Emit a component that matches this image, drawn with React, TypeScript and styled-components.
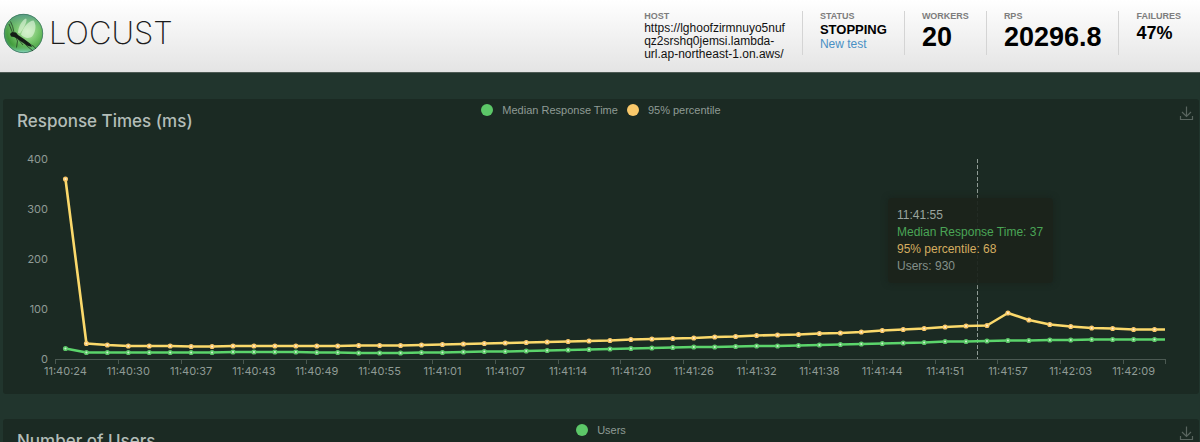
import React, { useLayoutEffect, useRef, useState } from 'react';
import styled, { createGlobalStyle } from 'styled-components';

const GlobalStyle = createGlobalStyle`
  * { box-sizing: border-box; }
  body {
    margin: 0;
    background: #21352d;
    font-family: "Liberation Sans", Arial, sans-serif;
  }
`;

const chartFont = 'Inter, "Liberation Sans", sans-serif';

const Page = styled.div`
  height: 100vh;
  overflow-y: auto;
  scrollbar-width: none;
`;

const Header = styled.header`
  display: flex;
  justify-content: space-between;
  height: 73px;
  background: linear-gradient(#ffffff, #e4e4e4);
  border-bottom: 1px solid #4d5a54;
`;

const Brand = styled.a`
  display: flex;
  align-items: center;
  gap: 5px;
  height: 66px;
  padding-left: 3px;
  color: #1c1c1c;
  text-decoration: none;
`;

const BrandName = styled.span`
  font-family: Inter, sans-serif;
  font-size: 31px;
  font-weight: 200;
  line-height: 40px;
`;

const Stats = styled.div`
  display: flex;
  align-items: flex-start;
  padding: 11px 2px 0 0;
`;

const Stat = styled.div`
  height: 44px;
  padding: 0 17px;
  border-right: 1px solid #d4d4d4;
  &:last-child { border-right: 0; }
`;

const StatLabel = styled.div`
  color: #7d7d7d;
  font-size: 9px;
  font-weight: 700;
  line-height: 11px;
`;

const HostValue = styled.div`
  color: #111;
  font-size: 12px;
  line-height: 13px;
  white-space: nowrap;
`;

const StatusValue = styled.div`
  font-size: 13px;
  font-weight: 700;
  line-height: 15px;
`;

const NewTest = styled.a`
  display: block;
  color: #4a90c4;
  font-size: 12px;
  line-height: 14px;
  text-decoration: none;
`;

const BigValue = styled.div<{ $size: number }>`
  font-size: ${(p) => p.$size}px;
  font-weight: 700;
  line-height: ${(p) => p.$size + 4}px;
`;

const Charts = styled.main`
  display: flex;
  flex-direction: column;
  gap: 25px;
  padding: 26px 1px 26px 3px;
`;

const Panel = styled.section`
  border-radius: 3px;
  background: #1b2a23;
`;

const PanelHead = styled.div`
  display: grid;
  grid-template-columns: 1fr auto 1fr;
  align-items: start;
  height: 40px;
  padding-top: 3px;
`;

const PanelTitle = styled.h2`
  margin: 7px 0 0 14px;
  color: #b3bdb8;
  font-family: ${chartFont};
  font-size: 17px;
  font-weight: 500;
  line-height: 24px;
`;

const Legend = styled.div`
  display: flex;
  gap: 9px;
`;

const LegendItem = styled.button<{ $off: boolean }>`
  display: flex;
  align-items: center;
  gap: 9px;
  padding: 0;
  border: 0;
  background: none;
  color: #8f9b95;
  font-family: inherit;
  font-size: 11px;
  line-height: 16px;
  opacity: ${(p) => (p.$off ? 0.4 : 1)};
  cursor: pointer;
`;

const Dot = styled.span<{ $color: string }>`
  width: 12px;
  height: 12px;
  border-radius: 50%;
  background: ${(p) => p.$color};
`;

const SaveButton = styled.button`
  justify-self: end;
  width: 16px;
  height: 16px;
  margin: 4px 5px 0 0;
  padding: 0;
  border: 0;
  background: none;
  color: #59655f;
  cursor: pointer;
  svg { display: block; }
`;

const Plot = styled.div`
  position: relative;
  height: 255px;
`;

const Svg = styled.svg`
  display: block;
  width: 100%;
  height: 255px;
  font-family: ${chartFont};
  font-size: 11px;
  fill: #8f9b95;
`;

const Tooltip = styled.div`
  position: absolute;
  top: 59px;
  padding: 9px 10px 8px 9px;
  border-radius: 4px;
  background: rgba(27, 34, 27, 0.93);
  box-shadow: 0 0 6px rgba(24, 32, 26, 0.8);
  font-size: 12px;
  line-height: 17px;
  white-space: nowrap;
`;

const TooltipLine = styled.div<{ $color: string }>`
  color: ${(p) => p.$color};
`;

type Series = { name: string; color: string; line: string; core: string; values: number[] };

const median: Series = {
  name: 'Median Response Time',
  color: '#5cc768',
  line: '#5bd46b',
  core: '#c9f3cd',
  values: [
    22, 14, 14, 14, 14, 14, 14, 14, 15, 15, 15, 15, 14, 14, 13, 13, 13, 14, 14, 15, 16, 16, 17, 18, 19, 20,
    21, 22, 23, 24, 25, 25, 26, 27, 27, 28, 29, 30, 31, 32, 33, 34, 36, 36, 37, 38, 38, 39, 39, 40, 40, 40, 40,
  ],
};

const percentile: Series = {
  name: '95% percentile',
  color: '#f9c86a',
  line: '#fbd96b',
  core: '#fff0cd',
  values: [
    361, 32, 29, 27, 27, 27, 26, 26, 27, 27, 27, 27, 27, 27, 28, 28, 28, 29, 30, 31, 32, 33, 34, 35, 36, 37,
    38, 40, 41, 42, 43, 45, 46, 48, 49, 50, 52, 53, 55, 58, 60, 62, 65, 67, 68, 93, 79, 70, 66, 63, 62, 60, 60,
  ],
};

const users: Series = {
  name: 'Users',
  color: '#5cc768',
  line: '#5bd46b',
  core: '#c9f3cd',
  values: median.values.map((_, i) => Math.min(1000, 20 + i * 21)),
};

const times = [
  '11:40:24', '11:40:30', '11:40:37', '11:40:43', '11:40:49', '11:40:55', '11:41:01', '11:41:07', '11:41:14',
  '11:41:20', '11:41:26', '11:41:32', '11:41:38', '11:41:44', '11:41:51', '11:41:57', '11:42:03', '11:42:09',
];

const COUNT = median.values.length;
const LABEL_EVERY = 3;
const LEFT = 52;
const RIGHT = 34;
const TOP = 20;
const PLOT_HEIGHT = 200;
const BASE = TOP + PLOT_HEIGHT;

type ChartProps = { title: string; series: Series[]; max: number; pointer?: number };

function Chart({ title, series, max, pointer }: ChartProps) {
  const box = useRef<HTMLDivElement>(null);
  const [width, setWidth] = useState(0);
  const [hidden, setHidden] = useState<string[]>([]);

  useLayoutEffect(() => {
    const el = box.current;
    if (!el) return;
    setWidth(el.clientWidth);
    const observer = new ResizeObserver(() => setWidth(el.clientWidth));
    observer.observe(el);
    return () => observer.disconnect();
  }, []);

  const right = Math.max(width - RIGHT, LEFT);
  const band = (right - LEFT) / COUNT;
  const x = (i: number) => LEFT + (i + 0.5) * band;
  const y = (v: number) => BASE + 0.5 - (v / max) * PLOT_HEIGHT;
  const pointerX = pointer === undefined ? 0 : Math.round(LEFT + pointer * band);
  const toggle = (name: string) =>
    setHidden((h) => (h.includes(name) ? h.filter((n) => n !== name) : [...h, name]));

  return (
    <Panel>
      <PanelHead>
        <PanelTitle>{title}</PanelTitle>
        <Legend>
          {series.map((s) => (
            <LegendItem
              key={s.name}
              type="button"
              aria-pressed={!hidden.includes(s.name)}
              $off={hidden.includes(s.name)}
              onClick={() => toggle(s.name)}
            >
              <Dot $color={s.color} />
              {s.name}
            </LegendItem>
          ))}
        </Legend>
        <SaveButton type="button" aria-label="Download as image">
          <svg width="16" height="16" viewBox="0 0 16 16" fill="none" stroke="currentColor" strokeWidth="1.2">
            <path d="M8.500 0.500v10M4 6l4.500 4.500L13 6M2.500 10v3.500h12V10" />
          </svg>
        </SaveButton>
      </PanelHead>
      <Plot ref={box}>
        {width > 0 && (
          <Svg role="img" aria-label={title}>
            {[0, 1, 2, 3, 4].map((n) => (
              <text key={n} x={45} y={BASE + 4 - (n * PLOT_HEIGHT) / 4} textAnchor="end">
                {(n * max) / 4}
              </text>
            ))}
            <path
              d={`M${LEFT} ${BASE + 0.5}H${right}`}
              stroke="#4b5952"
              strokeWidth="1"
              fill="none"
            />
            {[...times.map((_, i) => LEFT + i * LABEL_EVERY * band), right].map((tx) => (
              <path key={tx} d={`M${Math.round(tx) + 0.5} ${BASE}v5`} stroke="#4b5952" fill="none" />
            ))}
            {times.map((t, i) => (
              <text key={t} x={x(i * LABEL_EVERY)} y={BASE + 16} textAnchor="middle">
                {t}
              </text>
            ))}
            {pointer !== undefined && (
              <path
                d={`M${pointerX + 0.5} ${TOP}V${BASE}`}
                stroke="#8f9b95"
                strokeDasharray="4 2"
                fill="none"
              />
            )}
            {series
              .filter((s) => !hidden.includes(s.name))
              .map((s) => (
                <g key={s.name}>
                  <path
                    d={`M${s.values.map((v, i) => `${x(i)} ${y(v)}`).join('L')}H${right}`}
                    stroke={s.line}
                    strokeWidth="2.6"
                    strokeLinejoin="bevel"
                    fill="none"
                  />
                  {s.values.map((v, i) => (
                    <circle key={i} cx={x(i)} cy={y(v)} r="1.8" fill={s.core} stroke={s.color} strokeWidth="1.5" />
                  ))}
                </g>
              ))}
          </Svg>
        )}
        {pointer !== undefined && width > 0 && (
          <Tooltip role="tooltip" style={{ left: pointerX - 89 }}>
            <TooltipLine $color="#9aa59f">11:41:55</TooltipLine>
            <TooltipLine $color="#4aa556">Median Response Time: 37</TooltipLine>
            <TooltipLine $color="#d5ad60">95% percentile: 68</TooltipLine>
            <TooltipLine $color="#84908a">Users: 930</TooltipLine>
          </Tooltip>
        )}
      </Plot>
    </Panel>
  );
}

function LocustLogo() {
  return (
    <svg width="41" height="41" viewBox="0 0 41 41" aria-hidden="true">
      <defs>
        <radialGradient id="orb" cx="0.6" cy="0.45" r="0.65">
          <stop offset="0" stopColor="#c0ebb2" />
          <stop offset="0.45" stopColor="#74c46a" />
          <stop offset="0.8" stopColor="#429b3c" />
          <stop offset="1" stopColor="#4c9c72" />
        </radialGradient>
        <linearGradient id="shine" x1="0" y1="0" x2="0" y2="1">
          <stop offset="0" stopColor="#5a9a98" stopOpacity="0.8" />
          <stop offset="0.4" stopColor="#8fd08a" stopOpacity="0.15" />
          <stop offset="0.75" stopColor="#49a834" stopOpacity="0" />
          <stop offset="1" stopColor="#8fdcd0" stopOpacity="0.95" />
        </linearGradient>
      </defs>
      <circle cx="20.5" cy="20.5" r="19.5" fill="url(#orb)" />
      <circle cx="20.5" cy="20.5" r="19.2" fill="url(#shine)" stroke="#41776a" strokeWidth="0.8" />
      <path d="M15 20C15 14 19 7 23 5.500C25 7 21 15 17 20.500z" fill="#e4f6de" opacity="0.6" />
      <path d="M18 21.500C20 14 26 7.500 30.500 7.500C33.500 11 33 18 29.500 23C26 26.500 21 25 18 21.500z" fill="#e8f8e2" opacity="0.6" />
      <path d="M7 21L9 19L13 19.500L15 22L21 26L27 30.500L29 34L24 32.500L18 28.500L14 25.500L11 24L8 23.500z" fill="#141d16" />
      <path
        d="M9.500 19.500L6 11M11 19.500Q10 13 7.500 8.500M13 24.500L14.500 28L13.500 34.500M20 28L24 33L30 38M25 30L31 33.500L33 36M15 26L20 32"
        fill="none"
        stroke="#1d2f20"
        strokeWidth="0.7"
      />
    </svg>
  );
}

export default function App() {
  return (
    <Page>
      <GlobalStyle />
      <Header>
        <Brand href="#">
          <LocustLogo />
          <BrandName>LOCUST</BrandName>
        </Brand>
        <Stats>
          <Stat>
            <StatLabel>HOST</StatLabel>
            <HostValue>
              https://lghoofzirmnuyo5nuf
              <br />
              qz2srshq0jemsi.lambda-
              <br />
              url.ap-northeast-1.on.aws/
            </HostValue>
          </Stat>
          <Stat>
            <StatLabel>STATUS</StatLabel>
            <StatusValue>STOPPING</StatusValue>
            <NewTest href="#new">New test</NewTest>
          </Stat>
          <Stat>
            <StatLabel>WORKERS</StatLabel>
            <BigValue $size={27}>20</BigValue>
          </Stat>
          <Stat>
            <StatLabel>RPS</StatLabel>
            <BigValue $size={27}>20296.8</BigValue>
          </Stat>
          <Stat>
            <StatLabel>FAILURES</StatLabel>
            <BigValue $size={18}>47%</BigValue>
          </Stat>
        </Stats>
      </Header>
      <Charts>
        <Chart title="Response Times (ms)" series={[median, percentile]} max={400} pointer={44} />
        <Chart title="Number of Users" series={[users]} max={1000} />
      </Charts>
    </Page>
  );
}
